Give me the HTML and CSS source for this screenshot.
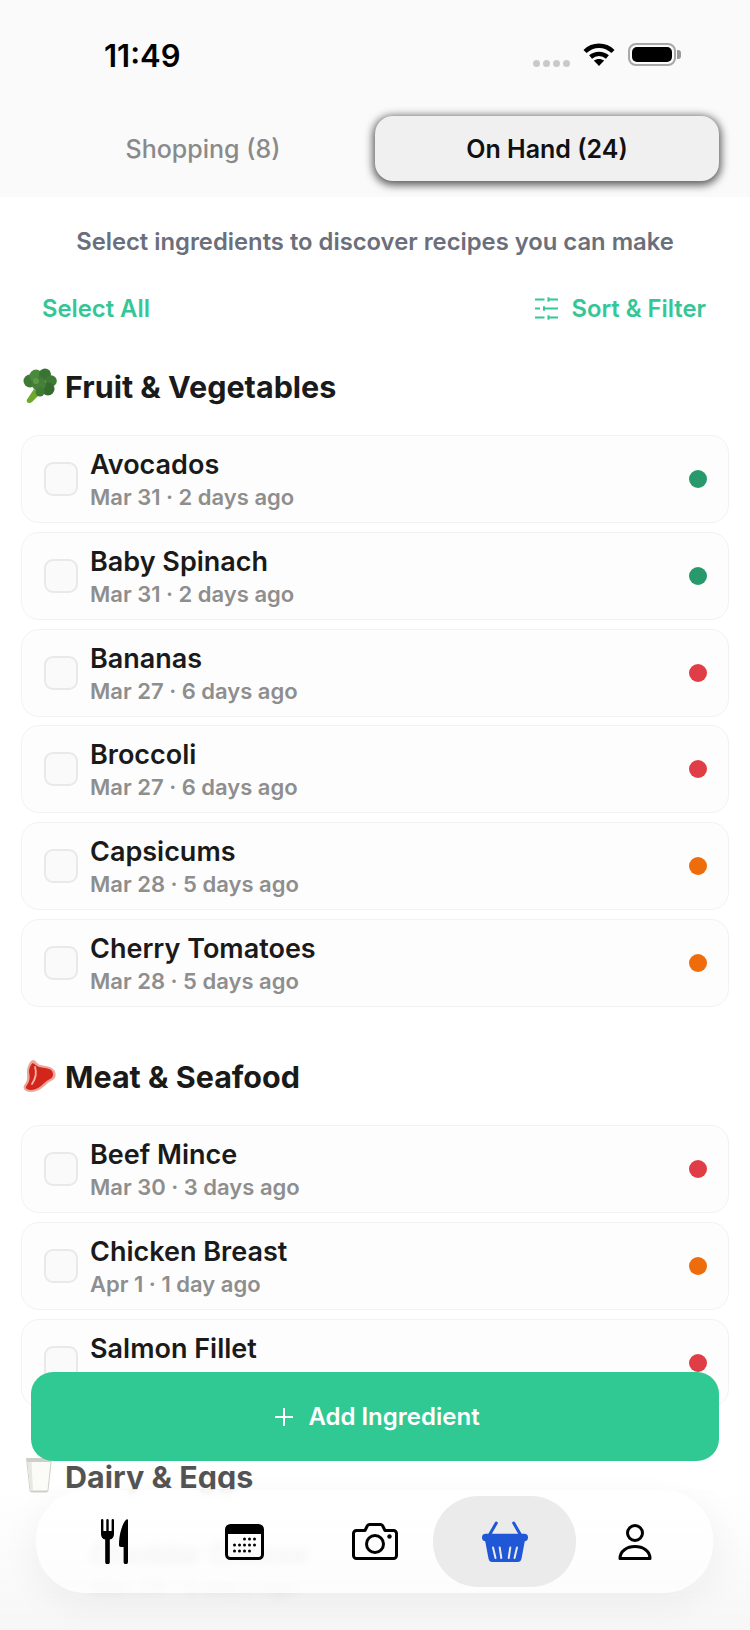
FILE: index.html
```html
<!DOCTYPE html>
<html>
<head>
	<meta charset="utf-8">
	<title>Pantry</title>
	<link rel="stylesheet" href="styles.css">
</head>
<body>
	<div class="phone">
		<div class="top">
			<div class="status">
				<span class="time">11:49</span>
				<div class="statusIcons">
					<span class="signal"><i></i><i></i><i></i><i></i></span>
					<svg class="wifi" width="32" height="23" viewBox="0 0 32 23">
						<path d="M2 8.5C10 .8 22 .8 30 8.5" fill="none" stroke="#000" stroke-width="4.4"/>
						<path d="M7.6 14C12.4 9.8 19.6 9.8 24.4 14" fill="none" stroke="#000" stroke-width="4.4"/>
						<path d="M16 23 10.8 17.6C13.8 15.4 18.2 15.4 21.2 17.6Z"/>
					</svg>
					<span class="battery"><b></b></span>
				</div>
			</div>
			<div class="tabs">
				<div class="tab">Shopping (8)</div>
				<div class="tab current">On Hand (24)</div>
			</div>
		</div>

		<p class="hint">Select ingredients to discover recipes you can make</p>
		<div class="actions">
			<a href="#">Select All</a>
			<a href="#" class="sort">
				<svg width="23" height="23" viewBox="0 0 23 23" fill="none" stroke="#34c796" stroke-width="2">
					<path d="M0 2.5H9.5M13.5 2.5H23M13.5 .3V4.7M0 11.5H5M9 11.5H23M9 9.3V13.7M0 20.5H9.5M13.5 20.5H23M13.5 18.3V22.7"/>
				</svg>
				Sort &amp; Filter
			</a>
		</div>

		<div class="section">
			<h2>
				<svg class="emoji" width="36" height="36" viewBox="0 0 36 36">
					<path d="M8 35c-2 0-3-2-2-3.500L13 21l6 5-8 8c-1 .8-2 1-3 1z" fill="#6ea92c"/>
					<circle cx="9" cy="13" r="6.500" fill="#3e7a35"/>
					<circle cx="15" cy="8" r="6.500" fill="#4a8a3c"/>
					<circle cx="24" cy="6.500" r="6" fill="#3a7432"/>
					<circle cx="30" cy="13" r="5.800" fill="#3e7a35"/>
					<circle cx="27" cy="21" r="6.500" fill="#356b2f"/>
					<circle cx="18" cy="16" r="7" fill="#467f38"/>
					<circle cx="19" cy="24" r="4.500" fill="#3e7a35"/>
					<circle cx="15" cy="13" r="3" fill="#5d9a48"/>
				</svg>
				Fruit &amp; Vegetables
			</h2>
			<ul>
				<li class="item"><span class="check"></span><div class="info"><div class="name">Avocados</div><div class="date">Mar 31 · 2 days ago</div></div><span class="dot green"></span></li>
				<li class="item"><span class="check"></span><div class="info"><div class="name">Baby Spinach</div><div class="date">Mar 31 · 2 days ago</div></div><span class="dot green"></span></li>
				<li class="item"><span class="check"></span><div class="info"><div class="name">Bananas</div><div class="date">Mar 27 · 6 days ago</div></div><span class="dot red"></span></li>
				<li class="item"><span class="check"></span><div class="info"><div class="name">Broccoli</div><div class="date">Mar 27 · 6 days ago</div></div><span class="dot red"></span></li>
				<li class="item"><span class="check"></span><div class="info"><div class="name">Capsicums</div><div class="date">Mar 28 · 5 days ago</div></div><span class="dot orange"></span></li>
				<li class="item"><span class="check"></span><div class="info"><div class="name">Cherry Tomatoes</div><div class="date">Mar 28 · 5 days ago</div></div><span class="dot orange"></span></li>
			</ul>
		</div>

		<div class="section">
			<h2>
				<svg class="emoji" width="36" height="36" viewBox="0 0 36 36">
					<path d="M12 2C15 2 16 6 19 7C24 8 30 8 33 12C36 16 35 21 30 23C26 25 25 27 21 30C16 34 9 35 5 33C2 31 2 28 4 26C7 22 6 19 6 14C6 9 9 2 12 2Z" fill="#eaa79d"/>
					<path d="M12 5C14 6 15 8 18 9C23 10 29 10 31 13C33 16 32 20 29 21C25 23 23 25 20 28C15 32 9 33 6 31C4 30 5 28 6 27C9 23 9 19 8 14C8 10 10 6 12 5Z" fill="#d3261a"/>
					<path d="M14 9C16 15 15 20 11 26" fill="none" stroke="#f1b7ac" stroke-width="1.800" stroke-linecap="round"/>
				</svg>
				Meat &amp; Seafood
			</h2>
			<ul>
				<li class="item"><span class="check"></span><div class="info"><div class="name">Beef Mince</div><div class="date">Mar 30 · 3 days ago</div></div><span class="dot red"></span></li>
				<li class="item"><span class="check"></span><div class="info"><div class="name">Chicken Breast</div><div class="date">Apr 1 · 1 day ago</div></div><span class="dot orange"></span></li>
				<li class="item"><span class="check"></span><div class="info"><div class="name">Salmon Fillet</div><div class="date">Mar 30 · 3 days ago</div></div><span class="dot red"></span></li>
			</ul>
		</div>

		<div class="section">
			<h2>
				<svg class="emoji" width="36" height="36" viewBox="0 0 36 36">
					<path d="M5 0H31L27.500 32c0 1.500-1 2.500-2.500 2.500H11c-1.500 0-2.500-1-2.500-2.500Z" fill="#cfcfca"/>
					<path d="M6.500 4H29.500L26.500 32.500H9.500Z" fill="#fbfbf8"/>
					<path d="M6.500 4H10.500L12 32.500H9.500Z" fill="#e8e8e2"/>
				</svg>
				<span>Dairy &amp; Eggs</span>
			</h2>
			<ul>
				<li class="item"><span class="check"></span><div class="info"><div class="name">Cheddar Cheese</div><div class="date">Mar 29 · 4 days ago</div></div></li>
			</ul>
		</div>

		<a href="#" class="addBtn">
			<svg width="18" height="18" viewBox="0 0 18 18" stroke="#fff" stroke-width="2"><path d="M9 0V18M0 9H18"/></svg>
			Add Ingredient
		</a>

		<div class="tabbar">
			<div class="nav">
				<a href="#" class="navItem">
					<svg width="27" height="45" viewBox="0 0 27 45">
						<path d="M0 1.200a1.200 1.200 0 0 1 2.400 0V12H5.300V1.200a1.200 1.200 0 0 1 2.400 0V12H10.600V1.200a1.200 1.200 0 0 1 2.400 0V15c0 3-1.600 5-4.200 5.600V43a2.300 2.300 0 0 1-4.600 0V20.600C1.600 20 0 18 0 15Z"/>
						<path d="M27 1V43a2.200 2.200 0 0 1-4.400 0V28H20c-1.400 0-2-1-2-2C18 14 22 3 25.500 .5c.8-.5 1.500 0 1.500 .5Z"/>
					</svg>
				</a>
				<a href="#" class="navItem">
					<svg width="39" height="36" viewBox="0 0 39 36">
						<rect x="1.500" y="1.500" width="36" height="33" rx="4" fill="none" stroke="#000" stroke-width="3"/>
						<path d="M1.500 10V5.500a4 4 0 0 1 4-4h28a4 4 0 0 1 4 4V10Z"/>
						<g>
							<circle cx="19.500" cy="15" r="1.500"/><circle cx="24.500" cy="15" r="1.500"/><circle cx="29.500" cy="15" r="1.500"/>
							<circle cx="9.500" cy="21" r="1.500"/><circle cx="14.500" cy="21" r="1.500"/><circle cx="19.500" cy="21" r="1.500"/><circle cx="24.500" cy="21" r="1.500"/><circle cx="29.500" cy="21" r="1.500"/>
							<circle cx="9.500" cy="27" r="1.500"/><circle cx="14.500" cy="27" r="1.500"/><circle cx="19.500" cy="27" r="1.500"/><circle cx="24.500" cy="27" r="1.500"/>
						</g>
					</svg>
				</a>
				<a href="#" class="navItem">
					<svg width="46" height="37" viewBox="0 0 46 37" fill="none" stroke="#000" stroke-width="3" stroke-linejoin="round">
						<path d="M4.500 7.500H13L15.500 2.500C16 1.800 16.500 1.500 17.500 1.500H28.500C29.500 1.500 30 1.800 30.500 2.500L33 7.500H41.500a3 3 0 0 1 3 3V32.500a3 3 0 0 1-3 3H4.500a3 3 0 0 1-3-3V10.500a3 3 0 0 1 3-3Z"/>
						<circle cx="23" cy="21" r="8.500"/>
						<circle cx="37.500" cy="13.500" r="2.200" fill="#000" stroke="none"/>
					</svg>
				</a>
				<a href="#" class="navItem current">
					<svg width="46" height="42" viewBox="0 0 46 42">
						<path d="M14.300 2 7.700 13.500M31.700 2 38.300 13.500" fill="none" stroke="#1f57d6" stroke-width="3" stroke-linecap="round"/>
						<rect y="12.700" width="46" height="7.500" rx="3.700" fill="#1f57d6"/>
						<path d="M3 19H43L39.500 37.500C39 40 38 41 35.500 41H10.500C8 41 7 40 6.500 37.500Z" fill="#1f57d6"/>
						<path d="M11 26.500 13.500 37M17.700 26.500 19.300 37M28.300 26.500 26.700 37M35 26.500 32.500 37" fill="none" stroke="#ebebeb" stroke-width="2" stroke-linecap="round"/>
					</svg>
				</a>
				<a href="#" class="navItem">
					<svg width="34" height="36" viewBox="0 0 34 36" fill="none" stroke="#000" stroke-width="3" stroke-linejoin="round">
						<circle cx="17" cy="9" r="7.500"/>
						<path d="M2 34.500C2 27 9 22.500 17 22.500S32 27 32 34.500Z"/>
					</svg>
				</a>
			</div>
		</div>
	</div>
</body>
</html>
```

FILE: styles.css
```css
html, body, div, h2, p, ul, li{
	padding: 0; margin: 0;
}
body{
	background: #fff;
	color: #1a1a1a;
	font-family: Inter, "Liberation Sans", sans-serif;
}
a{
	color: inherit;
	text-decoration: none;
}
.phone{
	position: relative;
	width: 750px;
	height: 1630px;
	overflow: hidden;
}

/* status bar and tab switch */
.top{
	background: #fafafa;
	height: 197px;
}
.status{
	display: flex;
	justify-content: space-between;
	height: 116px;
	padding: 37px 74px 0 104px;
	box-sizing: border-box;
}
.time{
	font-size: 31px;
	line-height: 37px;
	font-weight: 600;
	color: #000;
}
.statusIcons{
	display: flex;
	align-items: flex-start;
	padding-top: 6px;
}
.signal{
	display: flex;
	gap: 3px;
	margin: 17px 13px 0 0;
}
.signal i{
	width: 7px;
	height: 7px;
	border-radius: 50%;
	background: #c9c9c9;
}
.battery{
	position: relative;
	width: 48px;
	height: 23px;
	margin-left: 13px;
	border: 2px solid #a8a8a8;
	border-radius: 8px;
	box-sizing: border-box;
	padding: 2px;
}
.battery b{
	display: block;
	height: 100%;
	background: #000;
	border-radius: 5px;
}
.battery:after{
	content: "";
	position: absolute;
	right: -7px;
	top: 5px;
	width: 4px;
	height: 9px;
	background: #9a9a9a;
	border-radius: 0 3px 3px 0;
}
.tabs{
	display: grid;
	grid-template-columns: 1fr 1fr;
	margin: 0 31px;
	height: 65px;
}
.tab{
	display: flex;
	align-items: center;
	justify-content: center;
	font-size: 25px;
	font-weight: 500;
	color: #8a8a8a;
	border-radius: 18px;
}
.tab.current{
	background: #f0f0f0;
	color: #111;
	font-weight: 600;
	box-shadow: 0 2px 8px 2px rgba(0,0,0,.65);
}

/* intro text and actions */
.hint{
	margin-top: 31px;
	font-size: 23.800px;
	line-height: 28px;
	font-weight: 600;
	color: #6b6f7b;
	text-align: center;
}
.actions{
	display: flex;
	justify-content: space-between;
	align-items: center;
	height: 28px;
	margin-top: 38px;
	padding: 0 44px 0 42px;
	font-size: 23.800px;
	font-weight: 600;
	color: #34c796;
}
.sort{
	display: flex;
	align-items: center;
	gap: 14px;
}

/* ingredient groups */
.section{
	margin: 46px 21px 0;
}
.section + .section{
	margin-top: 51.500px;
}
.section h2{
	display: flex;
	align-items: center;
	gap: 8px;
	height: 36px;
	font-size: 30.500px;
	font-weight: 700;
	color: #1a1a1a;
}
.emoji{
	position: relative;
	z-index: 2;
}
.section ul{
	list-style-type: none;
	margin-top: 31px;
	display: flex;
	flex-direction: column;
	gap: 8.750px;
}
.item{
	display: flex;
	align-items: center;
	height: 88px;
	box-sizing: border-box;
	padding: 0 21px 0 22px;
	background: #fdfdfd;
	border: 1.500px solid #f2f2f2;
	border-radius: 18px;
}
.check{
	width: 34px;
	height: 34px;
	box-sizing: border-box;
	background: #fafafa;
	border: 2.500px solid #e9e9e9;
	border-radius: 9px;
}
.info{
	flex: 1;
	margin-left: 12px;
	padding-top: 2px;
}
.name{
	font-size: 27px;
	line-height: 32px;
	font-weight: 600;
	color: #1a1a1a;
}
.date{
	margin-top: 2px;
	font-size: 22px;
	line-height: 28px;
	font-weight: 600;
	color: #8e8e8e;
}
.dot{
	width: 18px;
	height: 18px;
	border-radius: 50%;
}
.green{ background: #27996a; }
.red{ background: #e03e46; }
.orange{ background: #ef6c0a; }

/* floating add button */
.addBtn{
	position: absolute;
	z-index: 3;
	left: 31px;
	top: 1372px;
	width: 688px;
	height: 89px;
	box-sizing: border-box;
	padding-left: 5px;
	display: flex;
	align-items: center;
	justify-content: center;
	gap: 15px;
	background: #30c993;
	border-radius: 22px;
	color: #fff;
	font-size: 24px;
	font-weight: 600;
}

/* bottom navigation */
.tabbar{
	position: absolute;
	left: 0;
	top: 1489px;
	right: 0;
	bottom: 0;
	background: linear-gradient(rgba(255,255,255,.8), rgba(246,246,246,.92));
	backdrop-filter: blur(5px);
}
.tabbar:before{
	content: "";
	position: absolute;
	left: 0;
	right: 0;
	top: -30px;
	height: 30px;
	background: rgba(255,255,255,.25);
}
.nav{
	display: flex;
	justify-content: center;
	align-items: center;
	box-sizing: border-box;
	width: 677px;
	height: 103px;
	margin: 1px 0 0 36px;
	background: rgba(255,255,255,.65);
	border-radius: 50px;
	box-shadow: 0 10px 40px rgba(0,0,0,.06);
}
.navItem{
	flex: 0 0 130px;
	height: 91px;
	display: flex;
	align-items: center;
	justify-content: center;
	color: #000;
}
.navItem.current{
	flex-basis: 143px;
	margin: 0 -6.500px;
	background: #ebebeb;
	border-radius: 45px;
}
```
